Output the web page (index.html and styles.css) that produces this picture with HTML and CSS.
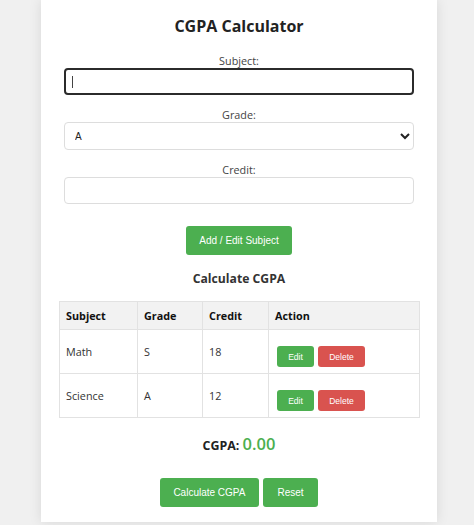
FILE: index.html
```html
<!DOCTYPE html>
<html lang="en">
<head>
<meta charset="utf-8">
<title>CGPA Calculator</title>
<link rel="stylesheet" href="styles.css">
</head>
<body>
<div class="card">
  <h1 class="title">CGPA Calculator</h1>
  <div class="form">
    <label class="label" for="subject">Subject:</label>
    <div class="field focused">
      <input class="input" id="subject" type="text">
      <span class="caret"></span>
    </div>
    <label class="label" for="grade">Grade:</label>
    <div class="field">
      <select class="select" id="grade">
        <option>A</option>
        <option>S</option>
        <option>B</option>
        <option>C</option>
      </select>
    </div>
    <label class="label" for="credit">Credit:</label>
    <div class="field">
      <input class="input" id="credit" type="number">
    </div>
  </div>
  <div class="center">
    <button class="btn btn-main">Add / Edit Subject</button>
  </div>
  <h2 class="subtitle">Calculate CGPA</h2>
  <table class="table">
    <colgroup>
      <col class="c1"><col class="c2"><col class="c3"><col class="c4">
    </colgroup>
    <thead>
      <tr class="head-row"><th>Subject</th><th>Grade</th><th>Credit</th><th>Action</th></tr>
    </thead>
    <tbody>
      <tr class="row">
        <td>Math</td><td>S</td><td>18</td>
        <td class="actions"><div class="act"><button class="btn btn-sm btn-edit">Edit</button><button class="btn btn-sm btn-del">Delete</button></div></td>
      </tr>
      <tr class="row">
        <td>Science</td><td>A</td><td>12</td>
        <td class="actions"><div class="act"><button class="btn btn-sm btn-edit">Edit</button><button class="btn btn-sm btn-del">Delete</button></div></td>
      </tr>
    </tbody>
  </table>
  <p class="result">CGPA: <span class="value">0.00</span></p>
  <div class="bottom">
    <button class="btn btn-main">Calculate CGPA</button>
    <button class="btn btn-main">Reset</button>
  </div>
</div>
</body>
</html>
```

FILE: styles.css
```css
html, body {
  margin: 0;
  padding: 0;
}
body {
  background: #f0f0f0;
  font-family: "Open Sans", "Noto Sans", sans-serif;
  color: #333;
  height: 525px;
  overflow: hidden;
}
.card {
  width: 396px;
  box-sizing: border-box;
  margin: 0 0 0 41px;
  height: 522px;
  background: #fff;
  padding: 15px 18px 14px;
  box-shadow: 0 0 12px rgba(0, 0, 0, 0.10);
}
.title {
  margin: 0;
  font-size: 16px;
  line-height: 23px;
  font-weight: 700;
  text-align: center;
  color: #222;
}
.form {
  margin: 15px 5px 0;
}
.label {
  display: block;
  text-align: center;
  font-size: 10.8px;
  line-height: 15px;
  color: #444;
}
.field {
  position: relative;
  margin-bottom: 12px;
}
.input, .select {
  display: block;
  width: 100%;
  box-sizing: border-box;
  height: 27px;
  border: 1px solid #ddd;
  border-radius: 4px;
  font-family: "Liberation Sans", Arial, sans-serif;
  font-size: 10px;
  padding: 0 10px;
  background: #fff;
  color: #222;
  outline: none;
}
.select {
  height: 28px;
  padding: 0 6px;
}
.focused .input {
  border: 2px solid #2b2b2b;
}
.caret {
  position: absolute;
  left: 8px;
  top: 8px;
  width: 1px;
  height: 12px;
  background: #444;
}
.center {
  text-align: center;
  margin-top: 22px;
}
.btn {
  font-family: "Liberation Sans", Arial, sans-serif;
  color: #fff;
  border: none;
  cursor: pointer;
}
.btn-main {
  background: #4caf50;
  font-size: 10px;
  height: 29px;
  padding: 0 13.5px;
  border-radius: 3px;
}
.subtitle {
  margin: 15px 0 13px;
  font-size: 12.2px;
  line-height: 18px;
  text-align: center;
  font-weight: 700;
  color: #333;
}
.table {
  width: 360px;
  table-layout: fixed;
  border-collapse: collapse;
  font-size: 10.8px;
}
.c1 { width: 78px; }
.c2 { width: 65px; }
.c3 { width: 66px; }
.c4 { width: 151px; }
.table th, .table td {
  border: 1px solid #e2e2e2;
  text-align: left;
  padding: 0 6px;
}
.head-row {
  height: 28px;
}
.row {
  height: 44px;
}
.table th {
  background: #f2f2f2;
  font-weight: 700;
  color: #111;
}
.table td {
  color: #333;
}
.table td.actions {
  padding: 10px 6px 0 8px;
}
.act {
  display: flex;
  gap: 4px;
}
.btn-sm {
  height: 21px;
  font-size: 8.5px;
  border-radius: 3px;
  padding: 0;
}
.btn-edit {
  background: #4caf50;
  width: 37px;
}
.btn-del {
  background: #d9534f;
  width: 47px;
}
.result {
  margin: 14px 0 0;
  text-align: center;
  font-size: 12.4px;
  font-weight: 700;
  line-height: 24px;
  color: #222;
}
.value {
  color: #4caf50;
  font-size: 16.5px;
  font-weight: 600;
}
.bottom {
  display: flex;
  justify-content: center;
  gap: 4px;
  margin-top: 20px;
}
.bottom .btn-main:last-child {
  padding: 0 14.5px;
}
```
